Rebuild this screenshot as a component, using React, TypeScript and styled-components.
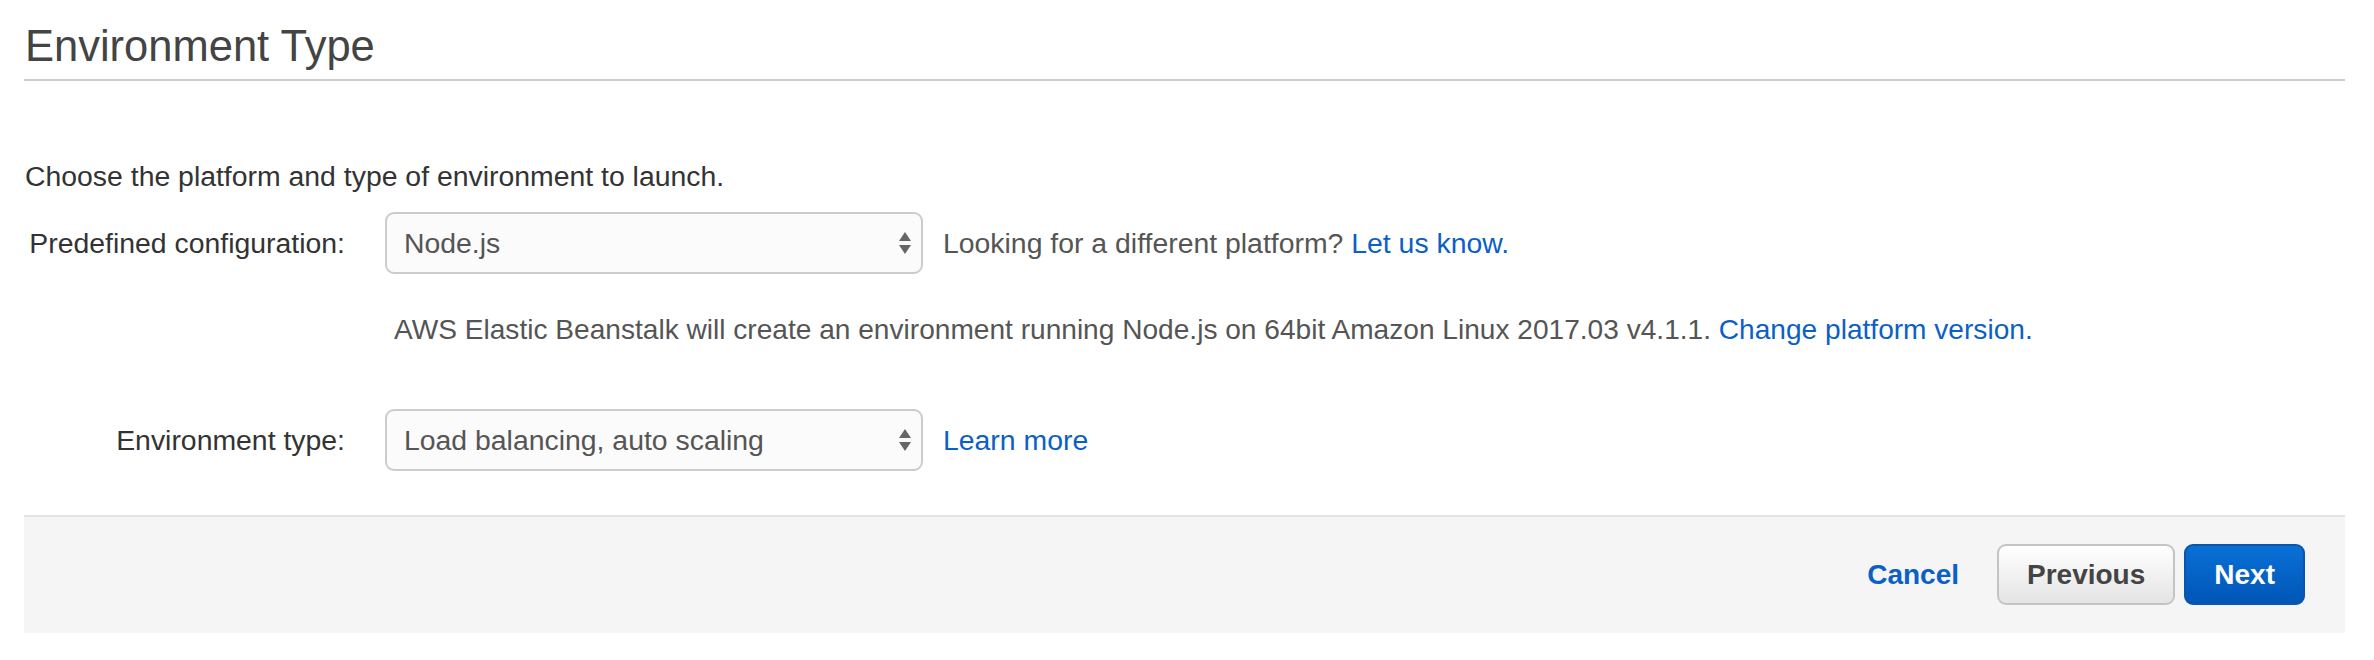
import React from "react";
import styled, { createGlobalStyle } from "styled-components";

const GlobalStyle = createGlobalStyle`
  html, body {
    margin: 0;
    padding: 0;
    background: #ffffff;
  }
  body {
    font-family: "Liberation Sans", Arial, Helvetica, sans-serif;
    color: #333333;
    -webkit-font-smoothing: antialiased;
  }
  * { box-sizing: border-box; }
`;

const Page = styled.div`
  padding: 20px 29px 0 24px;
  width: 2374px;
`;

const Header = styled.div`
  padding-bottom: 7px;
  border-bottom: 2px solid #cccccc;
`;

const Title = styled.h1`
  margin: 0;
  font-size: 43.5px;
  line-height: 52px;
  font-weight: 400;
  color: #444444;
  padding-left: 1px;
`;

const Intro = styled.p`
  margin: 75px 0 0 0;
  font-size: 28.4px;
  line-height: 40px;
  color: #333333;
  padding-left: 1px;
`;

const FormRow = styled.div<{ $top: number }>`
  display: grid;
  grid-template-columns: 321px 538px auto;
  column-gap: 40px;
  align-items: center;
  margin-top: ${(p) => p.$top}px;
`;

const Label = styled.label`
  font-size: 28.4px;
  line-height: 40px;
  color: #333333;
  text-align: right;
`;

const SelectBox = styled.div`
  position: relative;
  display: flex;
  align-items: center;
  width: 538px;
  height: 62px;
  padding: 0 40px 0 17px;
  border: 2px solid #cccccc;
  border-radius: 9px;
  background: #fbfbfb;
  font-size: 28.4px;
  line-height: 40px;
  color: #555555;
`;

const Arrows = styled.svg`
  position: absolute;
  right: 9px;
  top: 50%;
  transform: translateY(-50%);
`;

const Hint = styled.span`
  font-size: 28.4px;
  line-height: 40px;
  color: #555555;
  white-space: nowrap;
  margin-left: -20px;
`;

const Link = styled.a`
  color: #0b5fc6;
  text-decoration: none;
  cursor: pointer;
`;

const InfoRow = styled.div`
  margin-top: 36px;
  padding-left: 370px;
  font-size: 28.1px;
  line-height: 40px;
  color: #555555;
  white-space: nowrap;
`;

const Footer = styled.div`
  margin-top: 44px;
  height: 118px;
  background: #f5f5f5;
  border-top: 2px solid #e4e4e4;
  display: flex;
  align-items: center;
  justify-content: flex-end;
  padding: 0 40px 1px 0;
`;

const CancelLink = styled.a`
  font-size: 28px;
  font-weight: 700;
  color: #0b5fc6;
  text-decoration: none;
  margin-right: 38px;
  cursor: pointer;
`;

const Button = styled.button<{ $primary?: boolean }>`
  height: 61px;
  padding: 0 28px;
  margin-left: ${(p) => (p.$primary ? "9px" : "0")};
  font-family: "Liberation Sans", Arial, Helvetica, sans-serif;
  font-size: 28px;
  font-weight: 700;
  border-radius: 9px;
  cursor: pointer;
  color: ${(p) => (p.$primary ? "#ffffff" : "#444444")};
  border: 2px solid ${(p) => (p.$primary ? "#0a56ad" : "#c4c4c4")};
  background: ${(p) =>
    p.$primary
      ? "linear-gradient(to bottom, #0a70d6 0%, #0056b6 100%)"
      : "linear-gradient(to bottom, #ffffff 0%, #e4e4e4 100%)"};
`;

const SelectArrows = () => (
  <Arrows width="14" height="24" viewBox="0 0 14 24">
    <path d="M7 1 L13 10 L1 10 Z" fill="#666666" />
    <path d="M7 23 L13 14 L1 14 Z" fill="#666666" />
  </Arrows>
);

export default function App() {
  return (
    <>
      <GlobalStyle />
      <Page>
        <Header>
          <Title>Environment Type</Title>
        </Header>
        <Intro>Choose the platform and type of environment to launch.</Intro>

        <FormRow $top={16}>
          <Label>Predefined configuration:</Label>
          <SelectBox>
            Node.js
            <SelectArrows />
          </SelectBox>
          <Hint>
            Looking for a different platform? <Link>Let us know.</Link>
          </Hint>
        </FormRow>

        <InfoRow>
          AWS Elastic Beanstalk will create an environment running Node.js on
          64bit Amazon Linux 2017.03 v4.1.1.{" "}
          <Link>Change platform version.</Link>
        </InfoRow>

        <FormRow $top={59}>
          <Label>Environment type:</Label>
          <SelectBox>
            Load balancing, auto scaling
            <SelectArrows />
          </SelectBox>
          <Hint>
            <Link>Learn more</Link>
          </Hint>
        </FormRow>

        <Footer>
          <CancelLink>Cancel</CancelLink>
          <Button>Previous</Button>
          <Button $primary>Next</Button>
        </Footer>
      </Page>
    </>
  );
}
